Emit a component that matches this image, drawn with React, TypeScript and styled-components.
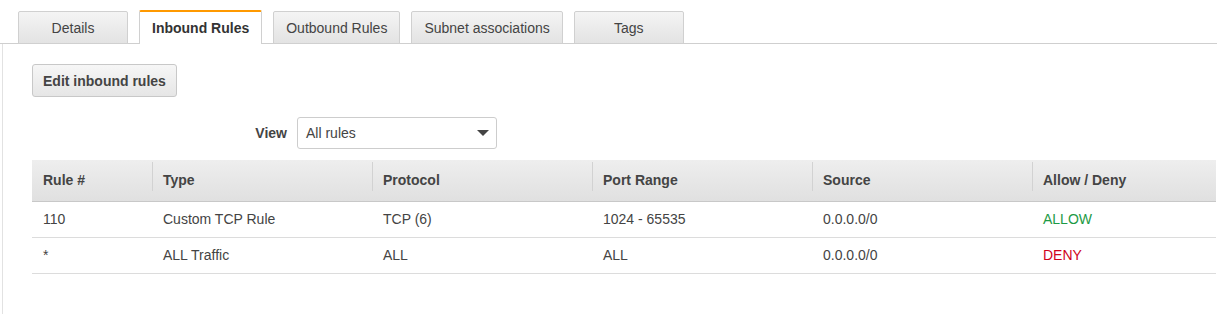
import React, {useState} from 'react';
import styled, {createGlobalStyle, css} from 'styled-components';

const GlobalStyle = createGlobalStyle`
  body {
    margin: 0;
    background: #fff;
    font-family: "Liberation Sans", Arial, sans-serif;
    font-size: 14px;
    color: #444;
  }
`;

const Page = styled.div`
  padding-top: 10px;
`;

const TabBar = styled.div`
  display: flex;
  align-items: flex-end;
  gap: 11px;
  padding-left: 18px;
  border-bottom: 1px solid #cfcfcf;
`;

const Tab = styled.div<{$active?: boolean}>`
  min-width: 110px;
  box-sizing: border-box;
  height: 33px;
  padding: 0 12px;
  margin-bottom: -1px;
  display: flex;
  align-items: center;
  justify-content: center;
  border: 1px solid #d0d0d0;
  border-radius: 2px 2px 0 0;
  background: linear-gradient(#f4f4f4, #e3e3e3);
  color: #444;
  cursor: pointer;
  ${(p) => p.$active && css`
    height: 34px;
    border-top: 2px solid #f90;
    border-bottom: none;
    background: #fff;
    font-weight: bold;
    color: #333;
    cursor: default;
  `}
`;

const Panel = styled.div`
  margin-left: 2px;
  border-left: 1px solid #e2e2e2;
  padding: 20px 1px 40px 29px;
`;

const Button = styled.button`
  height: 33px;
  padding: 0 10px;
  border: 1px solid #c8c8c8;
  border-radius: 3px;
  background: linear-gradient(#f6f6f6, #e6e6e6);
  font-family: inherit;
  font-size: 14px;
  font-weight: bold;
  color: #444;
  cursor: pointer;
`;

const FilterRow = styled.div`
  display: flex;
  align-items: center;
  margin-top: 20px;
`;

const FilterLabel = styled.span`
  width: 255px;
  margin-right: 10px;
  text-align: right;
  font-weight: bold;
  color: #444;
`;

const Select = styled.div`
  width: 200px;
  height: 32px;
  box-sizing: border-box;
  display: flex;
  align-items: center;
  justify-content: space-between;
  padding: 0 7px 0 8px;
  border: 1px solid #cdcdcd;
  border-radius: 3px;
  color: #444;
  cursor: pointer;
`;

const Caret = styled.span`
  width: 0;
  height: 0;
  border-left: 6px solid transparent;
  border-right: 6px solid transparent;
  border-top: 6px solid #444;
`;

const Table = styled.div`
  margin-top: 11px;
`;

const columns = '120px 220px 220px 220px 220px 1fr';

const HeadRow = styled.div`
  display: grid;
  grid-template-columns: ${columns};
  height: 40px;
  padding-bottom: 1px;
  align-items: center;
  background: linear-gradient(#eeeeee, #e0e0e0);
  border-bottom: 1px solid #c8c8c8;
`;

const HeadCell = styled.div<{$first?: boolean}>`
  position: relative;
  padding-left: 11px;
  font-weight: bold;
  color: #444;
  ${(p) => !p.$first && css`
    &::before {
      content: '';
      position: absolute;
      left: 0;
      top: -10px;
      height: 29px;
      border-left: 1px solid #d2d2d2;
    }
  `}
`;

const Row = styled.div`
  display: grid;
  grid-template-columns: ${columns};
  height: 33px;
  padding-bottom: 2px;
  align-items: center;
  border-bottom: 1px solid #dcdcdc;
`;

const Cell = styled.div<{$tone?: 'allow' | 'deny'}>`
  padding-left: 11px;
  color: ${(p) => p.$tone === 'allow' ? '#1d9a45' : p.$tone === 'deny' ? '#d0021b' : '#444'};
`;

const tabs = ['Details', 'Inbound Rules', 'Outbound Rules', 'Subnet associations', 'Tags'];
const heads = ['Rule #', 'Type', 'Protocol', 'Port Range', 'Source', 'Allow / Deny'];
const rules = [
  {num: '110', type: 'Custom TCP Rule', proto: 'TCP (6)', range: '1024 - 65535', src: '0.0.0.0/0', action: 'ALLOW'},
  {num: '*', type: 'ALL Traffic', proto: 'ALL', range: 'ALL', src: '0.0.0.0/0', action: 'DENY'},
];

const App: React.FunctionComponent = () => {
  const [active, setActive] = useState<number>(1);

  return (
    <Page>
      <GlobalStyle />
      <TabBar>
        {tabs.map((t, i) => (
          <Tab key={t} $active={i === active} onClick={() => setActive(i)}>
            {t}
          </Tab>
        ))}
      </TabBar>
      <Panel>
        <Button>Edit inbound rules</Button>
        <FilterRow>
          <FilterLabel>View</FilterLabel>
          <Select>
            <span>All rules</span>
            <Caret />
          </Select>
        </FilterRow>
        <Table>
          <HeadRow>
            {heads.map((h, i) => (
              <HeadCell key={h} $first={i === 0}>{h}</HeadCell>
            ))}
          </HeadRow>
          {rules.map((r) => (
            <Row key={r.num}>
              <Cell>{r.num}</Cell>
              <Cell>{r.type}</Cell>
              <Cell>{r.proto}</Cell>
              <Cell>{r.range}</Cell>
              <Cell>{r.src}</Cell>
              <Cell $tone={r.action === 'ALLOW' ? 'allow' : 'deny'}>{r.action}</Cell>
            </Row>
          ))}
        </Table>
      </Panel>
    </Page>
  );
};

export default App;
